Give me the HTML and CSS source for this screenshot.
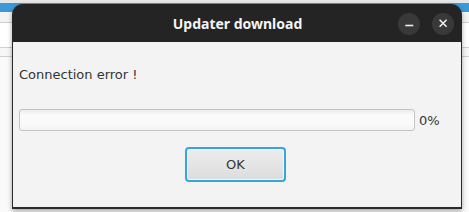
FILE: index.html
```html
<!doctype html>
<html>
  <head>
    <title>Updater download</title>
    <link rel="stylesheet" href="styles.css">
  </head>
  <body>
    <div class="desk">
      <div class="desk-top"></div>
      <div class="desk-bar"></div>
      <div class="desk-row row-a"></div>
      <div class="desk-row row-b"></div>
      <div class="desk-row row-c"></div>
    </div>

    <div class="window">
      <div class="titlebar">
        <span></span>
        <span class="title">Updater download</span>
        <div class="controls">
          <button class="win-btn" title="Minimize">
            <svg width="22" height="22" viewBox="0 0 22 22"><path d="M7.3 12.5h8" stroke="#eee" stroke-width="1.6"/></svg>
          </button>
          <button class="win-btn" title="Close">
            <svg width="22" height="22" viewBox="0 0 22 22"><path d="M7.6 6.8l7 7M14.6 6.8l-7 7" stroke="#eee" stroke-width="1.6"/></svg>
          </button>
        </div>
      </div>

      <div class="content">
        <p class="message">Connection error !</p>
        <div class="progress-row">
          <div class="progress"><div class="progress-fill" style="width: 0%"></div></div>
          <span class="percent">0%</span>
        </div>
        <div class="actions">
          <button class="ok-button">OK</button>
        </div>
      </div>
    </div>
  </body>
</html>
```

FILE: styles.css
```css
body {
  margin: 0;
  padding: 0;
  width: 469px;
  height: 212px;
  overflow: hidden;
  background-color: #fafafa;
  font-family: "DejaVu Sans", sans-serif;
}
.desk-top {
  height: 3px;
  background-color: #e6e6e6;
}
.desk-bar {
  height: 9px;
  background-color: #3b99d7;
}
.desk-row {
  border-bottom: 1px solid #cfcfcf;
}
.row-a {
  height: 10px;
  background-color: #f4f4f4;
}
.row-b {
  height: 24px;
  background-color: #ffffff;
}
.row-c {
  height: 8px;
  background-color: #f7f7f7;
}
.window {
  position: absolute;
  left: 12px;
  top: 4px;
  width: 450px;
  border-radius: 11px 11px 0 0;
  box-shadow: 0 2px 5px rgba(0, 0, 0, 0.35);
}
.titlebar {
  height: 38px;
  display: grid;
  grid-template-columns: 1fr auto 1fr;
  align-items: center;
  background-color: #242424;
  border-radius: 11px 11px 0 0;
}
.title {
  font-family: "Noto Sans", sans-serif;
  font-weight: bold;
  font-size: 14px;
  color: #f4f4f4;
  margin-left: 1px;
}
.controls {
  justify-self: end;
  display: flex;
  gap: 12px;
  margin-right: 8px;
  margin-top: 1px;
}
.win-btn {
  width: 22px;
  height: 22px;
  padding: 0;
  border: none;
  border-radius: 50%;
  background-color: #393939;
  display: flex;
  align-items: center;
  justify-content: center;
}
.win-btn svg {
  display: block;
}
.content {
  background-color: #f3f3f3;
  border: 1px solid #2a2a2a;
  border-top: none;
  border-bottom-width: 2px;
  padding: 25px 0 25px 0;
}
.message {
  margin: 0 0 27px 6px;
  font-size: 13px;
  line-height: 15px;
  color: #333;
}
.progress-row {
  display: flex;
  align-items: center;
  gap: 4px;
  margin-left: 6px;
}
.progress {
  width: 394px;
  height: 20px;
  border: 1px solid #c3c3c3;
  border-radius: 3px;
  background: linear-gradient(to bottom, #ececec, #fbfbfb 25%, #fafafa 70%, #f3f3f3);
}
.progress-fill {
  height: 100%;
  background-color: #0096c9;
}
.percent {
  font-size: 13px;
  color: #333;
}
.actions {
  display: flex;
  justify-content: center;
  margin-top: 16px;
  padding-right: 3px;
}
.ok-button {
  width: 101px;
  height: 35px;
  border: 2px solid #35a6dc;
  border-radius: 4px;
  box-shadow: inset 0 0 0 1px #f7f7f7;
  background: linear-gradient(to bottom, #ededed, #dcdcdc);
  font-family: "DejaVu Sans", sans-serif;
  font-size: 13px;
  color: #333;
  padding: 0;
}
```
